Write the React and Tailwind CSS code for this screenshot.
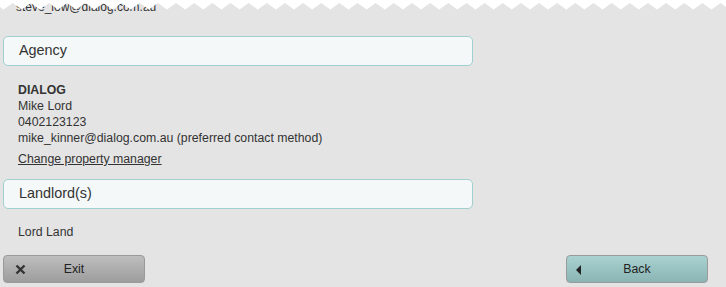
import React from "react";

function Zigzag() {
  const pts = ["0,0", "726,0"];
  const period = 18.15;
  const off = 12.7;
  const list = [];
  for (let k = -1; k <= 41; k++) {
    const px = off + period * k;
    list.push(`${px.toFixed(2)},3`);
    list.push(`${(px + period / 2).toFixed(2)},9.5`);
  }
  list.reverse();
  const all = [...pts, ...list].join(" ");
  return (
    <svg
      className="absolute left-0 top-0 pointer-events-none"
      width="726"
      height="12"
      viewBox="0 0 726 12"
    >
      <polygon points={all} fill="#ffffff" />
    </svg>
  );
}

export default function App() {
  return (
    <div
      className="relative w-[726px] h-[287px] overflow-hidden bg-[#e4e4e4] text-[#333333]"
      style={{ fontFamily: '"Liberation Sans", Arial, sans-serif' }}
    >
      <div className="pl-[16px] -mt-[1px] text-[12px] leading-[16px]">steve_low@dialog.com.au</div>
      <Zigzag />

      <div className="ml-[3px] mt-[21px] w-[470px] h-[30px] rounded-[5px] border border-[#9fcfce] bg-[#f4f8f9] flex items-center pl-[15px] text-[14.4px]">
        Agency
      </div>

      <div className="pl-[18px] mt-[16px] text-[12.3px] leading-[16px]">
        <div className="font-bold">DIALOG</div>
        <div>Mike Lord</div>
        <div>0402123123</div>
        <div>mike_kinner@dialog.com.au (preferred contact method)</div>
        <div className="mt-[5px] underline">Change property manager</div>
      </div>

      <div className="ml-[3px] mt-[12px] w-[470px] h-[30px] rounded-[5px] border border-[#9fcfce] bg-[#f4f8f9] flex items-center pl-[15px] text-[14.4px]">
        Landlord(s)
      </div>

      <div className="pl-[18px] mt-[15px] text-[12.3px] leading-[16px]">Lord Land</div>

      <div className="mt-[15px] flex justify-between pl-[3px] pr-[18px]">
        <button className="relative w-[142px] h-[28px] rounded-[4px] border border-[#9a9a9a] bg-gradient-to-b from-[#bebebe] to-[#9d9d9d] text-[12.3px] text-[#222] flex items-center justify-center">
          <svg className="absolute left-[11px] top-[8px]" width="11" height="11" viewBox="0 0 11 11">
            <path d="M1.5 1.5 L9.5 9.5 M9.5 1.5 L1.5 9.5" stroke="#333" strokeWidth="2.4" />
          </svg>
          Exit
        </button>
        <button className="relative w-[142px] h-[28px] rounded-[4px] border border-[#9a9a9a] bg-gradient-to-b from-[#a9d2d0] to-[#8ab5b4] text-[12.3px] text-[#222] flex items-center justify-center">
          <svg className="absolute left-[9px] top-[9px]" width="6" height="10" viewBox="0 0 6 10">
            <polygon points="5,0 5,10 0,5" fill="#222" />
          </svg>
          Back
        </button>
      </div>
    </div>
  );
}
